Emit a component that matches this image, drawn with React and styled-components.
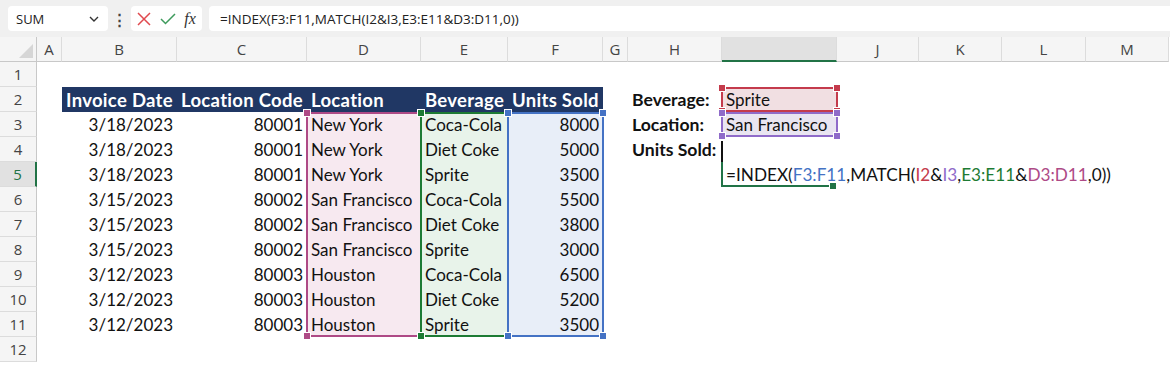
import React from 'react';
import styled, { createGlobalStyle } from 'styled-components';

const GlobalStyle = createGlobalStyle`
  body {
    margin: 0;
    background: #fff;
  }
`;

const UI_FONT = `"Open Sans", "Noto Sans", sans-serif`;
const CELL_FONT = `Lato, "Liberation Sans", sans-serif`;

const COLS = ['A', 'B', 'C', 'D', 'E', 'F', 'G', 'H', 'I', 'J', 'K', 'L', 'M'];
const WIDTHS = [25, 115, 130, 114, 87, 95, 25, 94, 115, 82, 83, 84, 83];
const colIndex = (letter) => COLS.indexOf(letter) + 2;

const Page = styled.div`
  width: 1170px;
  height: 365px;
  overflow: hidden;
  background: #fff;
`;

const FormulaBar = styled.div`
  height: 37px;
  background: #f0f0f0;
  display: flex;
  align-items: center;
  padding: 0 0 0 8px;
  font-family: ${UI_FONT};
`;

const NameBox = styled.div`
  width: 100px;
  height: 25px;
  box-sizing: border-box;
  background: #fff;
  border-radius: 4px;
  display: flex;
  align-items: center;
  justify-content: space-between;
  padding: 0 9px 0 8px;
  font-size: 13px;
  color: #222;
`;

const Dots = styled.div`
  width: 23px;
  text-align: center;
  font-size: 15px;
  font-weight: 700;
  color: #444;
`;

const ActionBox = styled.div`
  width: 71px;
  height: 25px;
  background: #fff;
  border-radius: 4px;
  display: flex;
  align-items: center;
  justify-content: space-around;
  padding: 0 2px;
  box-sizing: border-box;
`;

const Fx = styled.span`
  font-family: "Liberation Serif", serif;
  font-style: italic;
  font-size: 16px;
  color: #333;
`;

const FormulaInput = styled.div`
  flex: 1;
  margin-left: 7px;
  height: 25px;
  background: #fff;
  border-radius: 4px 0 0 4px;
  display: flex;
  align-items: center;
  padding-left: 11px;
  font-size: 13.5px;
  color: #222;
`;

const Sheet = styled.div`
  display: grid;
  grid-template-columns: 37px ${WIDTHS.map((w) => `${w}px`).join(' ')};
  grid-template-rows: repeat(13, 25px);
`;

const Corner = styled.div`
  grid-row: 1;
  grid-column: 1;
  background: #f5f5f5;
  border-right: 1px solid #c8c8c8;
  border-bottom: 1px solid #c8c8c8;
  display: flex;
  align-items: flex-end;
  justify-content: flex-end;
  padding: 0 3px 3px 0;
  box-sizing: border-box;
`;

const ColHead = styled.div`
  grid-row: 1;
  grid-column: ${(p) => p.$col};
  background: ${(p) => (p.$active ? '#e1e1e1' : '#f5f5f5')};
  border-right: 1px solid #dcdcdc;
  border-bottom: ${(p) => (p.$active ? '2px solid #217346' : '1px solid #c8c8c8')};
  box-sizing: border-box;
  display: flex;
  align-items: center;
  justify-content: center;
  font-family: ${UI_FONT};
  font-size: 15px;
  color: ${(p) => (p.$active ? '#217346' : '#444')};
`;

const RowHead = styled.div`
  grid-column: 1;
  grid-row: ${(p) => p.$row};
  background: ${(p) => (p.$active ? '#e1e1e1' : '#f5f5f5')};
  border-right: ${(p) => (p.$active ? '2px solid #217346' : '1px solid #c8c8c8')};
  border-bottom: 1px solid #dcdcdc;
  box-sizing: border-box;
  display: flex;
  align-items: center;
  justify-content: center;
  font-family: ${UI_FONT};
  font-size: 15px;
  color: ${(p) => (p.$active ? '#217346' : '#444')};
`;

const Fill = styled.div`
  grid-row: ${(p) => p.$rows};
  grid-column: ${(p) => p.$cols};
  background: ${(p) => p.$fill};
`;

const Cell = styled.div`
  grid-row: ${(p) => p.$row};
  grid-column: ${(p) => p.$col};
  position: relative;
  z-index: 1;
  display: flex;
  align-items: center;
  justify-content: ${(p) => (p.$right ? 'flex-end' : 'flex-start')};
  padding: 0 4px;
  white-space: nowrap;
  font-family: ${CELL_FONT};
  font-size: ${(p) => (p.$bold ? '17.6px' : '17px')};
  font-weight: ${(p) => (p.$bold ? 700 : 400)};
  color: #111;
`;

const HeadCell = styled(Cell)`
  background: #203764;
  color: #fff;
  font-weight: 700;
  font-size: 18.5px;
  letter-spacing: 0.3px;
  padding-top: 1px;
`;

const RangeBox = styled.div`
  grid-row: ${(p) => p.$rows};
  grid-column: ${(p) => p.$cols};
  position: relative;
  z-index: 2;
  margin: 0 -1px;
  border: 2px solid ${(p) => p.$color};
  pointer-events: none;
`;

const Handle = styled.span`
  position: absolute;
  width: 6px;
  height: 6px;
  background: ${(p) => p.$color};
  border: 1px solid #fff;
  ${(p) => (p.$top ? 'top: -5px;' : 'bottom: -5px;')}
  ${(p) => (p.$left ? 'left: -5px;' : 'right: -5px;')}
`;

const Caret = styled.div`
  grid-row: 5;
  grid-column: ${colIndex('I')};
  align-self: end;
  height: 21px;
  margin-left: -1px;
  border-left: 2px solid #111;
  position: relative;
  z-index: 2;
`;

const ActiveCell = styled.div`
  grid-row: 6;
  grid-column: ${colIndex('I')};
  position: relative;
  z-index: 2;
  margin: 0 5px 0 -1px;
  border-left: 2px solid #217346;
  border-bottom: 2px solid #217346;
  pointer-events: none;
`;

const FormulaCell = styled(Cell)`
  z-index: 3;
  overflow: visible;
  font-size: 17.2px;
`;

const Ref = styled.span`
  color: ${(p) => p.$color};
`;

const RED = '#c43b4c';
const PURPLE = '#8f6bc9';
const GREEN = '#1d7b34';
const MAGENTA = '#ae4a86';
const BLUE = '#4472c4';

const rows = [
  ['3/18/2023', '80001', 'New York', 'Coca-Cola', '8000'],
  ['3/18/2023', '80001', 'New York', 'Diet Coke', '5000'],
  ['3/18/2023', '80001', 'New York', 'Sprite', '3500'],
  ['3/15/2023', '80002', 'San Francisco', 'Coca-Cola', '5500'],
  ['3/15/2023', '80002', 'San Francisco', 'Diet Coke', '3800'],
  ['3/15/2023', '80002', 'San Francisco', 'Sprite', '3000'],
  ['3/12/2023', '80003', 'Houston', 'Coca-Cola', '6500'],
  ['3/12/2023', '80003', 'Houston', 'Diet Coke', '5200'],
  ['3/12/2023', '80003', 'Houston', 'Sprite', '3500'],
];

const headers = ['Invoice Date', 'Location Code', 'Location', 'Beverage', 'Units Sold'];

const Range = ({ rows: r, cols, color }) => (
  <RangeBox $rows={r} $cols={cols} $color={color}>
    <Handle $color={color} $top $left />
    <Handle $color={color} $top />
    <Handle $color={color} $left />
    <Handle $color={color} />
  </RangeBox>
);

const Chevron = () => (
  <svg width="10" height="6" viewBox="0 0 10 6">
    <path d="M1 1l4 4 4-4" fill="none" stroke="#333" strokeWidth="1.4" />
  </svg>
);

const Cross = () => (
  <svg width="14" height="14" viewBox="0 0 14 14">
    <path d="M1 1l12 12M13 1L1 13" stroke="#e04a4f" strokeWidth="1.5" fill="none" />
  </svg>
);

const Check = () => (
  <svg width="16" height="12" viewBox="0 0 16 12">
    <path d="M1 6l4.5 4.5L15 1" stroke="#3d9a5c" strokeWidth="1.5" fill="none" />
  </svg>
);

const CornerTri = () => (
  <svg width="14" height="14" viewBox="0 0 14 14">
    <path d="M14 0v14H0z" fill="#d6d6d6" />
  </svg>
);

export default function App() {
  const dataCols = ['B', 'C', 'D', 'E', 'F'];
  const rightAligned = [true, true, false, false, true];

  return (
    <Page>
      <GlobalStyle />
      <FormulaBar>
        <NameBox>
          <span>SUM</span>
          <Chevron />
        </NameBox>
        <Dots>⋮</Dots>
        <ActionBox>
          <Cross />
          <Check />
          <Fx>fx</Fx>
        </ActionBox>
        <FormulaInput>=INDEX(F3:F11,MATCH(I2&amp;I3,E3:E11&amp;D3:D11,0))</FormulaInput>
      </FormulaBar>

      <Sheet>
        <Corner>
          <CornerTri />
        </Corner>
        {COLS.map((c) => (
          <ColHead key={c} $col={colIndex(c)} $active={c === 'I'}>
            {c === 'I' ? '' : c}
          </ColHead>
        ))}
        {Array.from({ length: 12 }, (_, i) => (
          <RowHead key={i} $row={i + 2} $active={i + 1 === 5}>
            {i + 1}
          </RowHead>
        ))}

        <Fill $rows="4 / 13" $cols={`${colIndex('D')}`} $fill="#f7e9f0" />
        <Fill $rows="4 / 13" $cols={`${colIndex('E')}`} $fill="#e8f3ea" />
        <Fill $rows="4 / 13" $cols={`${colIndex('F')}`} $fill="#e8eef8" />
        <Fill $rows="3" $cols={`${colIndex('I')}`} $fill="#f1dfe2" />
        <Fill $rows="4" $cols={`${colIndex('I')}`} $fill="#e9e5f1" />

        {headers.map((h, i) => (
          <HeadCell key={h} $row={3} $col={colIndex(dataCols[i])}>
            {h}
          </HeadCell>
        ))}
        {rows.map((r, ri) =>
          r.map((v, ci) => (
            <Cell key={`${ri}-${ci}`} $row={ri + 4} $col={colIndex(dataCols[ci])} $right={rightAligned[ci]}>
              {v}
            </Cell>
          ))
        )}

        <Cell $row={3} $col={colIndex('H')} $bold>Beverage:</Cell>
        <Cell $row={4} $col={colIndex('H')} $bold>Location:</Cell>
        <Cell $row={5} $col={colIndex('H')} $bold>Units Sold:</Cell>
        <Cell $row={3} $col={colIndex('I')}>Sprite</Cell>
        <Cell $row={4} $col={colIndex('I')}>San Francisco</Cell>

        <Range rows="4 / 13" cols={`${colIndex('D')}`} color={MAGENTA} />
        <Range rows="4 / 13" cols={`${colIndex('E')}`} color={GREEN} />
        <Range rows="4 / 13" cols={`${colIndex('F')}`} color={BLUE} />
        <Range rows="3" cols={`${colIndex('I')}`} color={RED} />
        <Range rows="4" cols={`${colIndex('I')}`} color={PURPLE} />

        <Caret />
        <ActiveCell>
          <Handle $color="#217346" />
        </ActiveCell>
        <FormulaCell $row={6} $col={colIndex('I')}>
          =INDEX(<Ref $color={BLUE}>F3:F11</Ref>,MATCH(<Ref $color={RED}>I2</Ref>&amp;
          <Ref $color={PURPLE}>I3</Ref>,<Ref $color={GREEN}>E3:E11</Ref>&amp;
          <Ref $color={MAGENTA}>D3:D11</Ref>,0))
        </FormulaCell>
      </Sheet>
    </Page>
  );
}
